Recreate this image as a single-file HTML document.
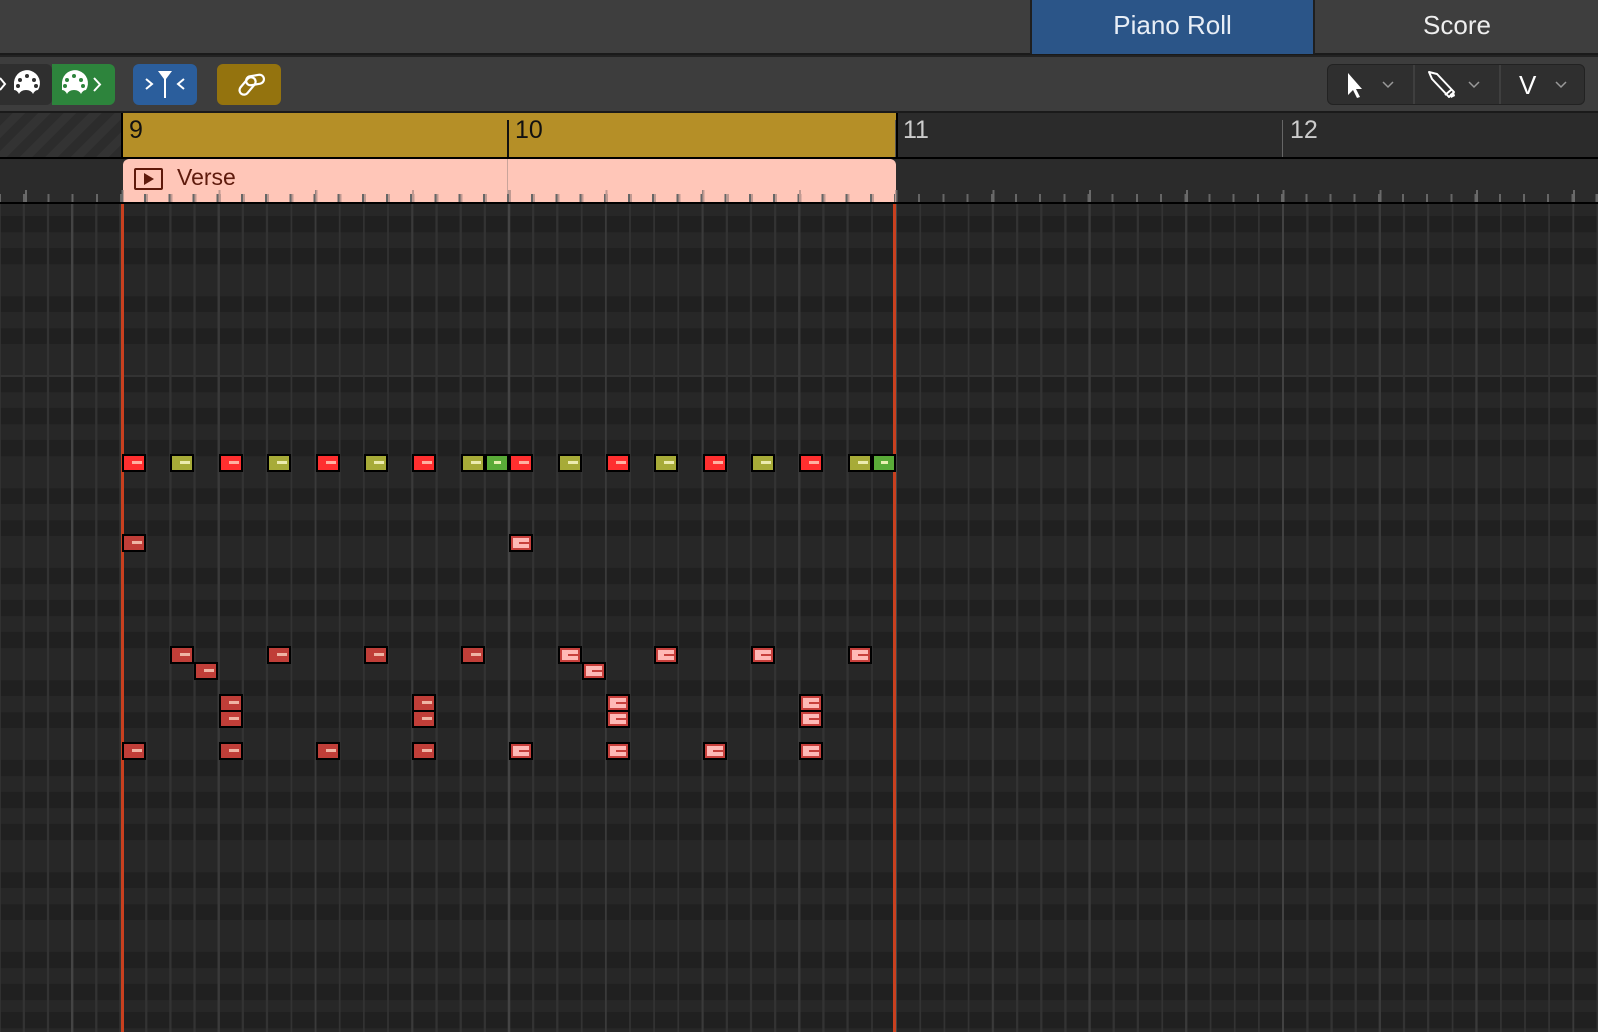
<!DOCTYPE html>
<html><head><meta charset="utf-8"><style>
*{margin:0;padding:0;box-sizing:border-box}
body{width:1598px;height:1032px;overflow:hidden;background:#222;font-family:"Liberation Sans",sans-serif;position:relative}
.a{position:absolute}
.n{position:absolute;width:24px;height:18px;background:#000;padding:2px}
.n i{display:block;width:100%;height:100%;position:relative}
.n i:after{content:"";position:absolute;left:8px;top:5px;width:10px;height:3px;background:rgba(255,220,200,.75)}
.r i{background:#ff2f2f}
.o i{background:#a7ab38}
.o i:after{background:#ecebae}
.g i{background:#5aab38}
.g i:after{background:#e8f0b0;left:7px;width:7px}
.d i{background:#c03e38}
.p i{background:#c8403c}
.p i:before{content:"";position:absolute;left:2px;top:2px;right:2px;bottom:2px;background:#ffb9b6}
.p i:after{background:#c8403c;left:8px;top:6px;width:12px;height:2px}
</style></head><body>
<!-- tab bar -->
<div class="a" style="left:0;top:0;width:1598px;height:55px;background:#3e3e3e;border-bottom:2px solid #1a1a1a"></div>
<div class="a" style="left:1030px;top:0;width:285px;height:54px;background:#2b5588;border-left:2px solid #1f1f1f;border-right:2px solid #1f1f1f;color:#e8eef6;font-size:26px;text-align:center;line-height:50px">Piano Roll</div>
<div class="a" style="left:1316px;top:0;width:282px;height:54px;color:#eee;font-size:26px;text-align:center;line-height:50px">Score</div>
<!-- toolbar -->
<div class="a" style="left:0;top:57px;width:1598px;height:56px;background:#3d3d3d;border-bottom:2px solid #1a1a1a"></div>
<div class="a" style="left:-10px;top:64px;width:62px;height:41px;background:#2f2f2f;border-radius:6px"></div>
<div class="a" style="left:52px;top:64px;width:63px;height:41px;background:#2d843c;border-radius:0 6px 6px 0"></div>
<svg class="a" style="left:0;top:64px" width="115" height="41">
<path d="M0 14 L5 20 L0 26" stroke="#fff" stroke-width="2" fill="none"/>
<path d="M15 21 a13 13 0 1 1 24 8 q-3 0 -5 4 q-2 -4 -7 -4 q-5 0 -7 4 q-2 -4 -5 -4 z" fill="#fff" transform="translate(-1,-3)"/>
<g fill="#2f2f2f"><circle cx="20" cy="16" r="2"/><circle cx="27" cy="12" r="2"/><circle cx="34" cy="16" r="2"/><circle cx="18" cy="22" r="2"/><circle cx="36" cy="22" r="2"/></g>
<path d="M74 21 a13 13 0 1 1 24 8 q-3 0 -5 4 q-2 -4 -7 -4 q-5 0 -7 4 q-2 -4 -5 -4 z" fill="#fff" transform="translate(-12,-3)"/>
<g fill="#2d843c"><circle cx="67" cy="16" r="2"/><circle cx="74" cy="12" r="2"/><circle cx="81" cy="16" r="2"/><circle cx="65" cy="22" r="2"/><circle cx="83" cy="22" r="2"/></g>
<path d="M94 14 L100 20.5 L94 27" stroke="#fff" stroke-width="2" fill="none"/>
</svg>
<div class="a" style="left:133px;top:64px;width:64px;height:41px;background:#2b5e9c;border-radius:6px"></div>
<svg class="a" style="left:133px;top:64px" width="64" height="41">
<path d="M13 15 L19 20 L13 25 M51 15 L45 20 L51 25" stroke="#fff" stroke-width="2" fill="none"/>
<path d="M25 7 L39 7 L33 15 L33 34 L31 34 L31 15 Z" fill="#fff"/>
</svg>
<div class="a" style="left:217px;top:64px;width:64px;height:41px;background:#94730e;border-radius:6px"></div>
<svg class="a" style="left:217px;top:64px" width="64" height="41">
<g stroke="#fff" stroke-width="2.2" fill="none">
<rect x="-6" y="-4.5" width="20" height="9" rx="4.5" transform="translate(28,25) rotate(-50)"/>
<rect x="-9" y="-4.5" width="18" height="9" rx="4.5" transform="translate(38,16) rotate(-10)"/>
</g></svg>
<!-- right tool segmented -->
<div class="a" style="left:1327px;top:64px;width:258px;height:41px;background:#2f2f2f;border:1px solid #222;border-radius:6px"></div>
<div class="a" style="left:1413px;top:65px;width:2px;height:39px;background:#3f3f3f"></div>
<div class="a" style="left:1499px;top:65px;width:2px;height:39px;background:#3f3f3f"></div>
<svg class="a" style="left:1327px;top:64px" width="258" height="41">
<path d="M21 9 L21 31 L26 26 L30 34 L33 33 L29 25 L35 25 Z" fill="#fff"/>
<path d="M56 18 L61 23 L66 18 M142 18 L147 23 L152 18 M229 18 L234 23 L239 18" stroke="#999" stroke-width="1.5" fill="none"/>
<path d="M102 8 L110 10 L127 28 L122 33 L105 15 Z M118 31 L124 26" stroke="#fff" stroke-width="2" fill="none" stroke-linejoin="round"/>
<path d="M123 30 L127 28 L128 32 L124 34 Z" fill="#fff"/>
<text x="192" y="30" fill="#fff" font-family="Liberation Sans" font-size="26">V</text>
</svg>
<!-- ruler -->
<div class="a" style="left:0;top:113px;width:122px;height:44px;background:repeating-linear-gradient(135deg,#2c2c2c 0 9px,#333 9px 18px)"></div>
<div class="a" style="left:122px;top:113px;width:1476px;height:44px;background:#2b2b2b"></div>
<div class="a" style="left:123px;top:113px;width:773px;height:44px;background:#b58f27"></div>
<div class="a" style="left:121px;top:113px;width:2px;height:91px;background:#000"></div>
<div class="a" style="left:896px;top:113px;width:2px;height:91px;background:#000"></div>
<div class="a" style="left:507px;top:120px;width:2px;height:37px;background:#111"></div>
<div class="a" style="left:895px;top:120px;width:1px;height:37px;background:#555"></div>
<div class="a" style="left:1282px;top:120px;width:1px;height:84px;background:#666"></div>
<div class="a" style="left:129px;top:116px;font-size:25px;color:#111">9</div>
<div class="a" style="left:515px;top:116px;font-size:25px;color:#111">10</div>
<div class="a" style="left:903px;top:116px;font-size:25px;color:#ccc">11</div>
<div class="a" style="left:1290px;top:116px;font-size:25px;color:#ccc">12</div>
<div class="a" style="left:0;top:157px;width:1598px;height:2px;background:#000"></div>
<!-- region row -->
<div class="a" style="left:0;top:159px;width:1598px;height:43px;background:#2b2b2b"></div>
<div class="a" style="left:123px;top:159px;width:773px;height:43px;background:#ffc6b8;border-radius:6px 6px 0 0"></div>
<div class="a" style="left:507px;top:159px;width:1px;height:43px;background:#c9a49b"></div>
<div class="a" style="left:134px;top:168px;width:29px;height:22px;border:2px solid #5e1a0c;border-radius:2px"></div>
<svg class="a" style="left:134px;top:168px" width="29" height="22"><path d="M10 5 L20 11 L10 17 Z" fill="#5e1a0c"/></svg>
<div class="a" style="left:177px;top:164px;font-size:23px;color:#5e1a0c">Verse</div>
<!-- ticks -->
<div class="a" style="left:0;top:194px;width:1598px;height:8px;background:repeating-linear-gradient(90deg,#666 0 2px,transparent 2px 24.19px);background-position:-1px 0"></div>
<div class="a" style="left:0;top:190px;width:1598px;height:12px;background:repeating-linear-gradient(90deg,#6a6a6a 0 2px,transparent 2px 96.75px);background-position:25px 0"></div>
<div class="a" style="left:123px;top:194px;width:773px;height:8px;background:repeating-linear-gradient(90deg,#c09a92 0 2px,transparent 2px 24.19px);background-position:-1px 0"></div>
<div class="a" style="left:123px;top:190px;width:773px;height:12px;background:repeating-linear-gradient(90deg,#c09a92 0 2px,transparent 2px 96.75px);background-position:-1px 0"></div>
<div class="a" style="left:0;top:202px;width:1598px;height:2px;background:#000"></div>
<!-- grid -->
<div class="a" style="left:0;top:204px;width:1598px;height:828px;background:
repeating-linear-gradient(180deg,
#202020 0 16px,#272727 16px 32px,#202020 32px 48px,#272727 48px 64px,#202020 64px 80px,#272727 80px 96px,#272727 96px 112px,#202020 112px 128px,#272727 128px 144px,#202020 144px 160px,#272727 160px 176px,#272727 176px 192px);background-position:0 -20px"></div>
<div class="a" style="left:0;top:375px;width:1598px;height:2px;background:#333"></div>
<div class="a" style="left:0;top:204px;width:1598px;height:828px;background:
repeating-linear-gradient(90deg,#444 0 2px,transparent 2px 387px),
repeating-linear-gradient(90deg,#3a3a3a 0 2px,transparent 2px 96.75px),
repeating-linear-gradient(90deg,#333 0 2px,transparent 2px 24.19px);background-position:121px 0,121px 0,121px 0"></div>
<div class="a" style="left:121px;top:204px;width:3px;height:828px;background:#c8401f"></div>
<div class="a" style="left:893px;top:204px;width:3px;height:828px;background:#c8401f"></div>
<!-- notes row 464 -->
<div class="n r" style="left:122px;top:454px"><i></i></div>
<div class="n o" style="left:170px;top:454px"><i></i></div>
<div class="n r" style="left:219px;top:454px"><i></i></div>
<div class="n o" style="left:267px;top:454px"><i></i></div>
<div class="n r" style="left:316px;top:454px"><i></i></div>
<div class="n o" style="left:364px;top:454px"><i></i></div>
<div class="n r" style="left:412px;top:454px"><i></i></div>
<div class="n o" style="left:461px;top:454px"><i></i></div>
<div class="n g" style="left:485px;top:454px"><i></i></div>
<div class="n r" style="left:509px;top:454px"><i></i></div>
<div class="n o" style="left:558px;top:454px"><i></i></div>
<div class="n r" style="left:606px;top:454px"><i></i></div>
<div class="n o" style="left:654px;top:454px"><i></i></div>
<div class="n r" style="left:703px;top:454px"><i></i></div>
<div class="n o" style="left:751px;top:454px"><i></i></div>
<div class="n r" style="left:799px;top:454px"><i></i></div>
<div class="n o" style="left:848px;top:454px"><i></i></div>
<div class="n g" style="left:872px;top:454px"><i></i></div>
<!-- 542 -->
<div class="n d" style="left:122px;top:534px"><i></i></div>
<div class="n p" style="left:509px;top:534px"><i></i></div>
<!-- 654 -->
<div class="n d" style="left:170px;top:646px"><i></i></div>
<div class="n d" style="left:267px;top:646px"><i></i></div>
<div class="n d" style="left:364px;top:646px"><i></i></div>
<div class="n d" style="left:461px;top:646px"><i></i></div>
<div class="n p" style="left:558px;top:646px"><i></i></div>
<div class="n p" style="left:654px;top:646px"><i></i></div>
<div class="n p" style="left:751px;top:646px"><i></i></div>
<div class="n p" style="left:848px;top:646px"><i></i></div>
<!-- 670 -->
<div class="n d" style="left:194px;top:662px"><i></i></div>
<div class="n p" style="left:582px;top:662px"><i></i></div>
<!-- 702 / 718 -->
<div class="n d" style="left:219px;top:694px"><i></i></div>
<div class="n d" style="left:412px;top:694px"><i></i></div>
<div class="n p" style="left:606px;top:694px"><i></i></div>
<div class="n p" style="left:799px;top:694px"><i></i></div>
<div class="n d" style="left:219px;top:710px"><i></i></div>
<div class="n d" style="left:412px;top:710px"><i></i></div>
<div class="n p" style="left:606px;top:710px"><i></i></div>
<div class="n p" style="left:799px;top:710px"><i></i></div>
<!-- 750 -->
<div class="n d" style="left:122px;top:742px"><i></i></div>
<div class="n d" style="left:219px;top:742px"><i></i></div>
<div class="n d" style="left:316px;top:742px"><i></i></div>
<div class="n d" style="left:412px;top:742px"><i></i></div>
<div class="n p" style="left:509px;top:742px"><i></i></div>
<div class="n p" style="left:606px;top:742px"><i></i></div>
<div class="n p" style="left:703px;top:742px"><i></i></div>
<div class="n p" style="left:799px;top:742px"><i></i></div>
</body></html>
